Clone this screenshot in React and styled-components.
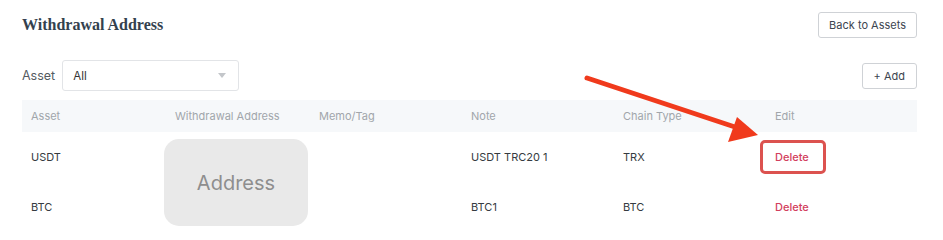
import styled, { createGlobalStyle } from "styled-components";

const GlobalStyle = createGlobalStyle`
  body {
    margin: 0;
    background: #fff;
    font-family: Inter, "Noto Sans", sans-serif;
  }
`;

const Page = styled.div`
  position: relative;
  width: 943px;
  height: 240px;
  padding: 12px 26px 0 22px;
  box-sizing: border-box;
  overflow: hidden;
`;

const Header = styled.div`
  display: flex;
  align-items: center;
  justify-content: space-between;
  height: 26px;
`;

const Title = styled.h1`
  margin: 0;
  font-family: "Liberation Serif", "DejaVu Serif", serif;
  font-weight: bold;
  font-size: 16px;
  color: #33414e;
`;

const OutlineButton = styled.button`
  height: ${({ $h }) => $h || 26}px;
  padding: 0 ${({ $px }) => $px || 12}px;
  border: 1px solid #cfd2d6;
  border-radius: 3px;
  background: #fff;
  font-family: Inter, "Noto Sans", sans-serif;
  font-size: 11px;
  color: #3c4550;
  cursor: pointer;
`;

const Filters = styled.div`
  display: flex;
  align-items: center;
  justify-content: space-between;
  margin-top: 22px;
  height: 31px;
`;

const FilterGroup = styled.div`
  display: flex;
  align-items: center;
  gap: 7px;
`;

const FilterLabel = styled.span`
  font-size: 12.5px;
  color: #555b61;
`;

const Select = styled.div`
  display: flex;
  align-items: center;
  justify-content: space-between;
  width: 177px;
  height: 31px;
  box-sizing: border-box;
  padding: 0 12px 0 10px;
  border: 1px solid #e2e4e7;
  border-radius: 3px;
  font-size: 11.5px;
  color: #333;
`;

const Caret = styled.span`
  width: 0;
  height: 0;
  border-left: 4px solid transparent;
  border-right: 4px solid transparent;
  border-top: 5px solid #c3c6ca;
`;

const Table = styled.div`
  position: relative;
  margin-top: 9px;
`;

const Row = styled.div`
  display: grid;
  grid-template-columns: 144px 144px 152px 152px 152px 1fr;
  align-items: center;
  height: ${({ $head }) => ($head ? 32 : 50)}px;
  padding-left: 9px;
  background: ${({ $head }) => ($head ? "#f6f8fa" : "transparent")};
  font-size: 11px;
  color: ${({ $head }) => ($head ? "#a1a6ab" : "#353b41")};
`;

const Cell = styled.div`
  white-space: nowrap;
`;

const DeleteLink = styled.span`
  position: relative;
  color: #d2405d;
  font-weight: 500;
  cursor: pointer;

  ${({ $highlight }) =>
    $highlight &&
    `
    &::after {
      content: "";
      position: absolute;
      left: -15px;
      right: -17px;
      top: -10px;
      bottom: -10px;
      border: 3px solid #dc524f;
      border-radius: 5px;
    }
  `}
`;

const AddressMask = styled.div`
  position: absolute;
  left: 142px;
  top: 39px;
  width: 144px;
  height: 87px;
  border-radius: 15px;
  background: #e9e9e9;
  display: flex;
  align-items: center;
  justify-content: center;
  font-family: Inter, "Noto Sans", sans-serif;
  font-size: 20px;
  color: #8e8e8e;
`;

const Arrow = styled.svg`
  position: absolute;
  left: 0;
  top: 0;
  pointer-events: none;
`;

const rows = [
  { asset: "USDT", memo: "", note: "USDT TRC20 1", chain: "TRX", highlight: true },
  { asset: "BTC", memo: "", note: "BTC1", chain: "BTC" },
];

export default function App() {
  return (
    <Page>
      <GlobalStyle />
      <Header>
        <Title>Withdrawal Address</Title>
        <OutlineButton $h={26} $px={10}>Back to Assets</OutlineButton>
      </Header>
      <Filters>
        <FilterGroup>
          <FilterLabel>Asset</FilterLabel>
          <Select>
            All
            <Caret />
          </Select>
        </FilterGroup>
        <OutlineButton $h={26} $px={11}>+ Add</OutlineButton>
      </Filters>
      <Table>
        <Row $head>
          <Cell>Asset</Cell>
          <Cell>Withdrawal Address</Cell>
          <Cell>Memo/Tag</Cell>
          <Cell>Note</Cell>
          <Cell>Chain Type</Cell>
          <Cell>Edit</Cell>
        </Row>
        {rows.map((r) => (
          <Row key={r.asset}>
            <Cell>{r.asset}</Cell>
            <Cell />
            <Cell>{r.memo}</Cell>
            <Cell>{r.note}</Cell>
            <Cell>{r.chain}</Cell>
            <Cell>
              <DeleteLink $highlight={r.highlight}>Delete</DeleteLink>
            </Cell>
          </Row>
        ))}
        <AddressMask>Address</AddressMask>
      </Table>
      <Arrow width="943" height="240" viewBox="0 0 943 240">
        <line x1="587" y1="78" x2="738" y2="128" stroke="#f03a1c" strokeWidth="5" strokeLinecap="round" />
        <polygon points="737,117 758,135 728,142" fill="#f03a1c" />
      </Arrow>
    </Page>
  );
}
